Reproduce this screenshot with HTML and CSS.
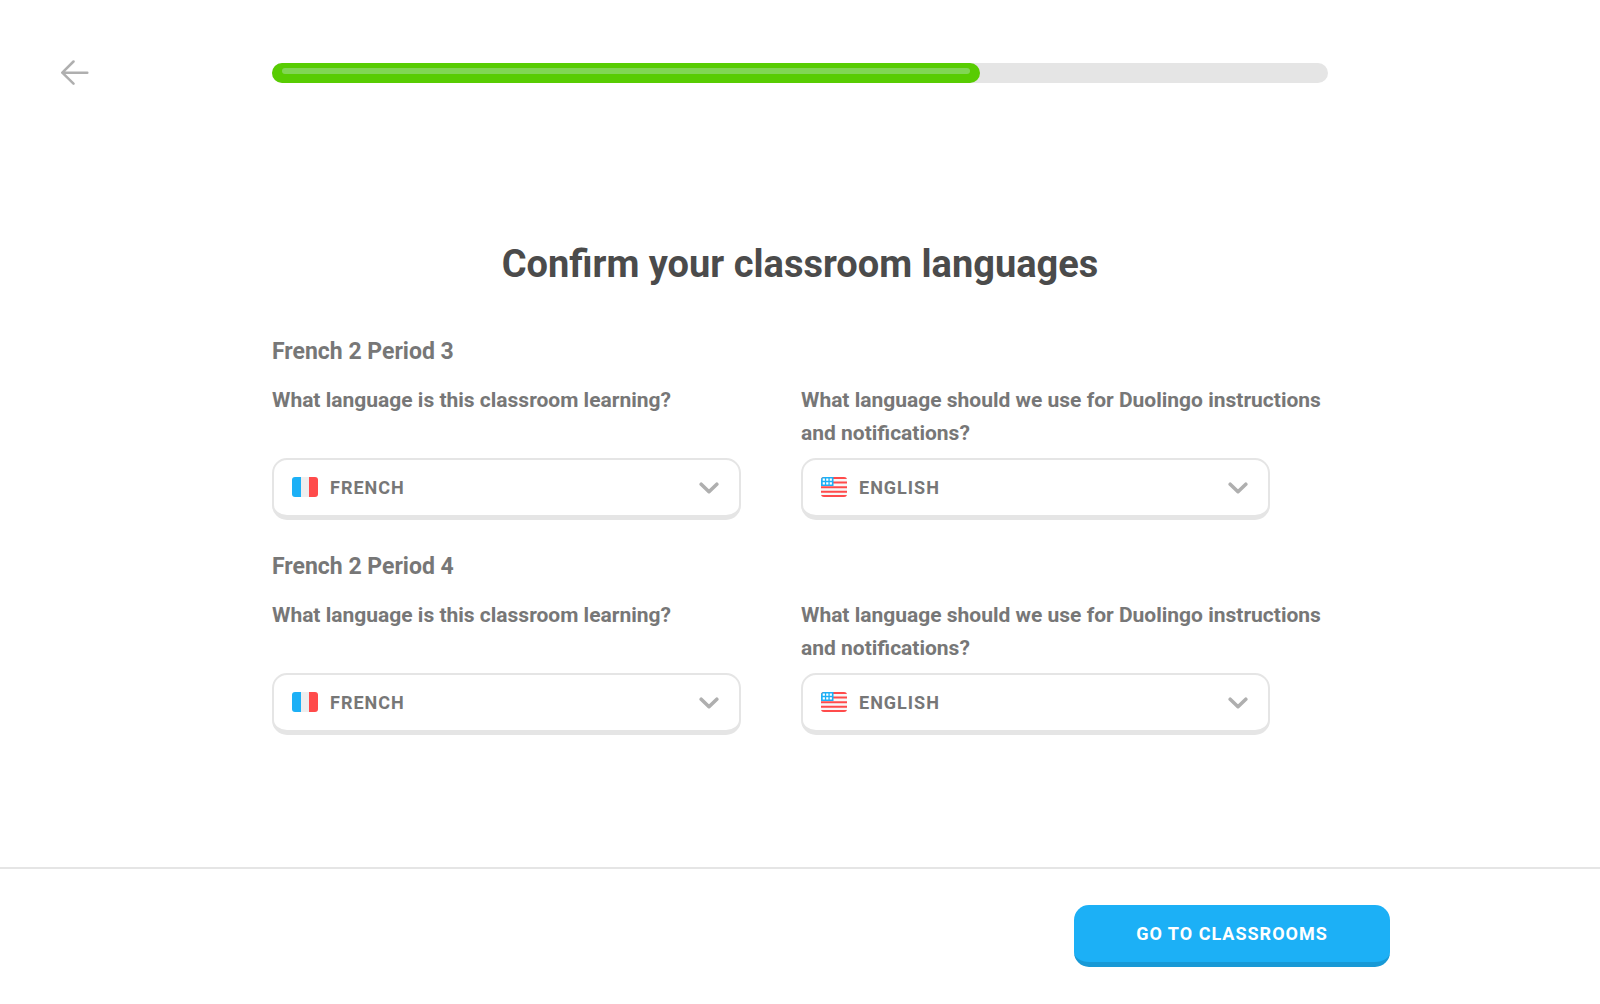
FILE: index.html
```html
<!DOCTYPE html>
<html lang="en">
<head>
<meta charset="utf-8">
<meta name="viewport" content="width=device-width, initial-scale=1">
<title>Confirm your classroom languages</title>
<link rel="stylesheet" href="styles.css">
</head>
<body>
<svg class="sprite" aria-hidden="true">
  <symbol id="flag-fr" viewBox="0 0 26 20">
    <path fill="#1cb0f6" d="M3 0h6v20H3a3 3 0 0 1-3-3V3a3 3 0 0 1 3-3z"/>
    <path fill="#eee" d="M9 0h8v20H9z"/>
    <path fill="#ff4b4b" d="M17 0h6a3 3 0 0 1 3 3v14a3 3 0 0 1-3 3h-6z"/>
  </symbol>
  <symbol id="flag-us" viewBox="0 0 26 20">
    <clipPath id="us-shape"><rect width="26" height="20" rx="3"/></clipPath>
    <g clip-path="url(#us-shape)">
      <path fill="#f7f7f7" d="M0 0h26v20H0z"/>
      <path stroke="#ff4b4b" stroke-width="2" d="M0 1h26M0 5.500h26M0 10.300h26M0 14.700h26M0 19h26"/>
      <path fill="#1cb0f6" d="M0 0h12.500v9H0z"/>
      <path fill="#fff" d="M1.700 1.500h2.200v2.200H1.700zM5.200 1.500h2.200v2.200H5.200zM8.700 1.500h2.200v2.200H8.700zM1.700 5.300h2.200v2.200H1.700zM5.200 5.300h2.200v2.200H5.200zM8.700 5.300h2.200v2.200H8.700z"/>
    </g>
  </symbol>
  <symbol id="chevron" viewBox="0 0 20 12">
    <path fill="none" stroke="#afafaf" stroke-width="3.600" stroke-linecap="round" stroke-linejoin="round" d="M2.200 2.200 10 9.700l7.800-7.500"/>
  </symbol>
</svg>

<header class="topbar">
  <button class="back" type="button" aria-label="Back">
    <svg width="28" height="26" viewBox="0 0 28 26" fill="none" stroke="#afafaf" stroke-width="2.500" stroke-linecap="round" stroke-linejoin="round"><path d="M12.500 1.500 1.300 12.700 12.500 23.700M1.300 12.700h25"/></svg>
  </button>
  <div class="progress" role="progressbar" aria-label="Setup progress" aria-valuemin="0" aria-valuemax="100" aria-valuenow="67">
    <div class="progress-fill" style="width: 67%"><div class="progress-shine"></div></div>
  </div>
</header>

<main class="content">
  <h1 class="heading">Confirm your classroom languages</h1>

  <section class="classroom">
    <h2 class="classroom-name">French 2 Period 3</h2>
    <div class="fields">
      <div class="field">
        <label class="question" for="learning-3">What language is this classroom learning?</label>
        <div class="picker">
          <select class="picker-select" id="learning-3"><option>French</option></select>
          <svg class="flag" aria-hidden="true"><use href="#flag-fr"/></svg>
          <svg class="chevron" aria-hidden="true"><use href="#chevron"/></svg>
        </div>
      </div>
      <div class="field">
        <label class="question" for="using-3">What language should we use for Duolingo instructions and notifications?</label>
        <div class="picker">
          <select class="picker-select" id="using-3"><option>English</option></select>
          <svg class="flag" aria-hidden="true"><use href="#flag-us"/></svg>
          <svg class="chevron" aria-hidden="true"><use href="#chevron"/></svg>
        </div>
      </div>
    </div>
  </section>

  <section class="classroom">
    <h2 class="classroom-name">French 2 Period 4</h2>
    <div class="fields">
      <div class="field">
        <label class="question" for="learning-4">What language is this classroom learning?</label>
        <div class="picker">
          <select class="picker-select" id="learning-4"><option>French</option></select>
          <svg class="flag" aria-hidden="true"><use href="#flag-fr"/></svg>
          <svg class="chevron" aria-hidden="true"><use href="#chevron"/></svg>
        </div>
      </div>
      <div class="field">
        <label class="question" for="using-4">What language should we use for Duolingo instructions and notifications?</label>
        <div class="picker">
          <select class="picker-select" id="using-4"><option>English</option></select>
          <svg class="flag" aria-hidden="true"><use href="#flag-us"/></svg>
          <svg class="chevron" aria-hidden="true"><use href="#chevron"/></svg>
        </div>
      </div>
    </div>
  </section>
</main>

<footer class="footer">
  <div class="footer-inner">
    <button class="primary" type="button">Go to classrooms</button>
  </div>
</footer>
</body>
</html>
```
FILE: styles.css
```css
* {
  box-sizing: border-box;
}

body {
  margin: 0;
  min-height: 100vh;
  display: flex;
  flex-direction: column;
  background: #fff;
  color: #777;
  font-family: Roboto, "Liberation Sans", sans-serif;
  font-weight: 700;
}

.sprite {
  position: absolute;
  width: 0;
  height: 0;
}

.topbar {
  display: grid;
  grid-template-columns: 1fr minmax(0, 1056px) 1fr;
  align-items: center;
  padding-top: 60px;
}

.back {
  justify-self: start;
  display: flex;
  margin-left: 61px;
  padding: 0;
  border: 0;
  background: none;
  cursor: pointer;
}

.progress {
  height: 20px;
  border-radius: 10px;
  background: #e5e5e5;
}

.progress-fill {
  height: 100%;
  padding: 5px 10px;
  border-radius: 10px;
  background: #58cc02;
}

.progress-shine {
  height: 6px;
  border-radius: 3px;
  background: #81d654;
}

.content {
  flex: 1;
  width: 100%;
  max-width: 1056px;
  margin: 0 auto;
  padding: 154px 0 32px;
}

.heading {
  margin: 0 0 48px;
  color: #4b4b4b;
  font-size: 38px;
  line-height: 48px;
  text-align: center;
}

.classroom + .classroom {
  margin-top: 31px;
}

.classroom-name {
  margin: 0 0 16px;
  font-size: 23px;
  line-height: 32px;
}

.fields {
  display: grid;
  grid-template-columns: 1fr 1fr;
  column-gap: 2px;
}

.field {
  display: flex;
  flex-direction: column;
  justify-content: space-between;
  gap: 8px;
}

.question {
  font-size: 21px;
  line-height: 33px;
}

.picker {
  display: grid;
  align-items: center;
  margin-right: 58px;
}

.picker > * {
  grid-area: 1 / 1;
}

.picker-select {
  appearance: none;
  width: 100%;
  height: 62px;
  padding: 0 56px;
  border: 2px solid #e5e5e5;
  border-bottom-width: 5px;
  border-radius: 15px;
  background: #fff;
  color: #777;
  font: inherit;
  font-size: 18px;
  letter-spacing: 1px;
  text-transform: uppercase;
  cursor: pointer;
}

.flag {
  width: 26px;
  height: 20px;
  margin: 0 0 4px 20px;
  pointer-events: none;
}

.chevron {
  justify-self: end;
  width: 20px;
  height: 12px;
  margin: 0 22px 2px 0;
  pointer-events: none;
}

.footer {
  padding: 36px 0 37px;
  border-top: 2px solid #e5e5e5;
}

.footer-inner {
  display: flex;
  justify-content: flex-end;
  max-width: 1180px;
  margin: 0 auto;
}

.primary {
  width: 316px;
  height: 62px;
  padding: 0;
  border: 0;
  border-bottom: 5px solid #1899d6;
  border-radius: 15px;
  background: #1cb0f6;
  color: #fff;
  font: inherit;
  font-size: 18px;
  letter-spacing: 1px;
  text-transform: uppercase;
  cursor: pointer;
}
```
